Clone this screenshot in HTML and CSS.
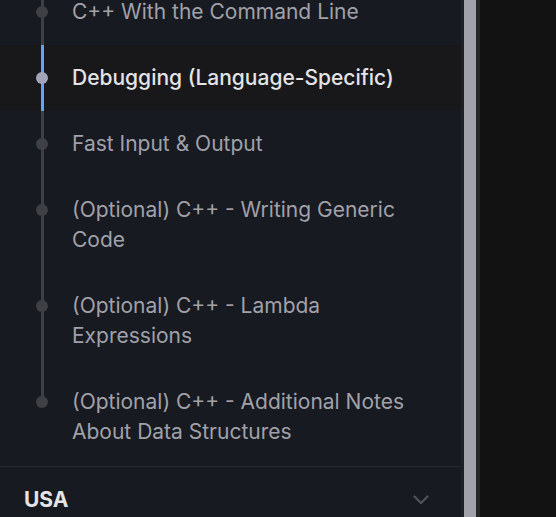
FILE: index.html
```html
<!DOCTYPE html>
<html>
<head>
<meta charset="utf-8">
<link rel="stylesheet" href="styles.css">
</head>
<body>
<div class="app">
  <aside class="sidebar">
    <ul class="steps">
      <li class="step"><span class="dot"></span>C++ With the Command Line</li>
      <li class="step active"><span class="dot"></span>Debugging (Language-Specific)</li>
      <li class="step"><span class="dot"></span>Fast Input &amp; Output</li>
      <li class="step"><span class="dot"></span>(Optional) C++ - Writing Generic Code</li>
      <li class="step"><span class="dot"></span>(Optional) C++ - Lambda Expressions</li>
      <li class="step last"><span class="dot"></span>(Optional) C++ - Additional Notes About Data Structures</li>
    </ul>
    <div class="section">
      <span class="section-title">USA</span>
      <svg class="chevron" width="16" height="10" viewBox="0 0 16 10"><path d="M1.5 1.5 L8 8 L14.5 1.5" fill="none" stroke="#52525b" stroke-width="2.2" stroke-linecap="round" stroke-linejoin="round"/></svg>
    </div>
  </aside>
  <div class="scrollbar"></div>
  <main class="main"></main>
</div>
</body>
</html>
```
FILE: styles.css
```css
* { box-sizing: border-box; }
html, body { margin: 0; padding: 0; height: 100%; background: #121212; overflow: hidden; }
body { font-family: Inter, "Noto Sans", sans-serif; }
.app { display: flex; height: 517px; }
.sidebar { width: 461px; flex: none; background: #171a21; overflow: hidden; }
.steps { list-style: none; margin: -21px 0 0 0; padding: 0; }
.step {
  position: relative;
  padding: 18px 40px 18px 72px;
  font-size: 21px;
  line-height: 30px;
  color: #a1a1aa;
}
.step::before {
  content: "";
  position: absolute;
  left: 41px;
  top: 0;
  bottom: 0;
  width: 3px;
  background: #3f3f46;
}
.step.last::before { bottom: auto; height: 33px; }
.step .dot {
  position: absolute;
  left: 36px;
  top: 27px;
  width: 12px;
  height: 12px;
  border-radius: 50%;
  background: #3f3f46;
  z-index: 1;
}
.step.active { background: #18181b; color: #e4e4e7; font-weight: 550; }
.step.active::before { background: #60a5fa; }
.step.active .dot { background: #a1a5b7; }
.section {
  border-top: 1px solid #262a31;
  margin-top: 1px;
  display: flex;
  align-items: center;
  justify-content: space-between;
  padding: 18px 32px 18px 24px;
}
.section-title { font-size: 21px; line-height: 30px; font-weight: 700; color: #e4e4e7; }
.chevron { display: block; }
.scrollbar { width: 19px; flex: none; background: linear-gradient(to right, #1c1f25 0 3px, #a1a1aa 3px 15px, #262626 15px 19px); }
.main { flex: 1; background: #121212; }
```
